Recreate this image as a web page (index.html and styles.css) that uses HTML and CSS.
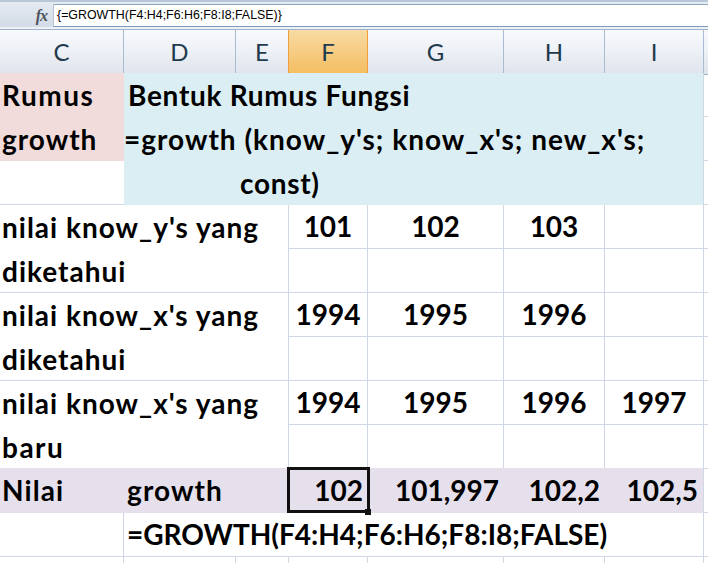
FILE: index.html
```html
<!DOCTYPE html>
<html>
<head>
<meta charset="utf-8">
<link rel="stylesheet" href="styles.css">
</head>
<body>
<div class="fbar">
  <div class="fx"><span class="fx-i">fx</span></div>
  <div class="formula">{=GROWTH(F4:H4;F6:H6;F8:I8;FALSE)}</div>
</div>
<div class="gap"></div>
<div class="hdr">
  <div class="h">C</div>
  <div class="h">D</div>
  <div class="h">E</div>
  <div class="h sel">F</div>
  <div class="h">G</div>
  <div class="h">H</div>
  <div class="h">I</div>
  <div class="h end"></div>
</div>
<div class="sheet">
  <!-- rows 1-3 -->
  <div class="pink"><div class="ln pl wl">Rumus</div><div class="ln pl">growth</div></div>
  <div class="blue">
    <div class="ln b1 nl">Bentuk Rumus Fungsi</div>
    <div class="ln b2">=growth (know_y's; know_x's; new_x's;</div>
    <div class="ln b3 nl">const)</div>
  </div>
  <div class="cell x"></div>
  <div class="cell x"></div>
  <div class="cell nr"></div>
  <div class="cell x"></div>

  <!-- rows 4-5 -->
  <div class="cell lab"><div class="ln pl">nilai know_y's yang</div><div class="ln pl">diketahui</div></div>
  <div class="cell num">101</div>
  <div class="cell num">102</div>
  <div class="cell num">103</div>
  <div class="cell num"></div>
  <div class="cell x"></div>
  <div class="cell"></div>
  <div class="cell"></div>
  <div class="cell"></div>
  <div class="cell"></div>
  <div class="cell x"></div>

  <!-- rows 6-7 -->
  <div class="cell lab"><div class="ln pl">nilai know_x's yang</div><div class="ln pl">diketahui</div></div>
  <div class="cell num">1994</div>
  <div class="cell num">1995</div>
  <div class="cell num">1996</div>
  <div class="cell num"></div>
  <div class="cell x"></div>
  <div class="cell"></div>
  <div class="cell"></div>
  <div class="cell"></div>
  <div class="cell"></div>
  <div class="cell x"></div>

  <!-- rows 8-9 -->
  <div class="cell lab"><div class="ln pl">nilai know_x's yang</div><div class="ln pl wl">baru</div></div>
  <div class="cell num">1994</div>
  <div class="cell num">1995</div>
  <div class="cell num">1996</div>
  <div class="cell num">1997</div>
  <div class="cell x"></div>
  <div class="cell"></div>
  <div class="cell"></div>
  <div class="cell"></div>
  <div class="cell"></div>
  <div class="cell x"></div>

  <!-- row 10 -->
  <div class="pur pl lw">Nilai</div>
  <div class="pur pd lw">growth</div>
  <div class="pur"></div>
  <div class="pur rt active">102<span class="selbox"></span><span class="handle"></span></div>
  <div class="pur rt">101,997</div>
  <div class="pur rt">102,2</div>
  <div class="pur rt last">102,5</div>
  <div class="cell x"></div>

  <!-- row 11 -->
  <div class="cell"></div>
  <div class="cell wide pd">=GROWTH(F4:H4;F6:H6;F8:I8;FALSE)</div>
  <div class="cell x"></div>

  <!-- row 12 -->
  <div class="cell"></div>
  <div class="cell"></div>
  <div class="cell"></div>
  <div class="cell"></div>
  <div class="cell"></div>
  <div class="cell"></div>
  <div class="cell"></div>
  <div class="cell x"></div>
</div>
</body>
</html>
```
FILE: styles.css
```css
html, body {
  margin: 0;
  padding: 0;
}
body {
  width: 708px;
  height: 563px;
  overflow: hidden;
  background: #ffffff;
  font-family: Lato, "Liberation Sans", sans-serif;
}

/* formula bar */
.fbar {
  display: flex;
  height: 27px;
  box-sizing: border-box;
  border-top: 2px solid #b9c8d9;
  padding-top: 2px;
  background: linear-gradient(to bottom, #e6ebf2 0%, #d9e1eb 60%, #d3dce7 100%);
}
.fx {
  width: 53px;
  flex: none;
  display: flex;
  align-items: center;
  justify-content: flex-end;
  padding-right: 6px;
  box-sizing: border-box;
}
.fx-i {
  font-family: "Liberation Serif", serif;
  font-style: italic;
  font-weight: 700;
  font-size: 16px;
  color: #4d535b;
  letter-spacing: -1px;
  line-height: 16px;
}
.formula {
  flex: 1;
  height: 23px;
  box-sizing: border-box;
  background: #ffffff;
  border-top: 1px solid #8ea7c1;
  border-bottom: 1px solid #7e9aba;
  border-left: 1px solid #b3c3d5;
  padding-left: 3px;
  font-family: "Liberation Sans", sans-serif;
  font-size: 12.4px;
  line-height: 21px;
  color: #000000;
  white-space: nowrap;
}
.gap {
  height: 2px;
  background: #eef2f7;
}

/* column headers */
.hdr {
  display: grid;
  grid-template-columns: 124px 112px 53px 79px 136px 101px 99px 1fr;
  height: 44px;
  box-sizing: border-box;
  border-top: 1px solid #9fb4cc;
}
.h {
  box-sizing: border-box;
  border-right: 1px solid #a7bbd3;
  border-bottom: 1px solid #9eb4cd;
  background: linear-gradient(to bottom, #f8f9fc 0%, #eef1f6 45%, #dfe4ec 100%);
  text-align: center;
  font-size: 24px;
  line-height: 44px;
  color: #1f3a4c;
}
.h.sel {
  margin-left: -1px;
  border-left: 1px solid #f29c3a;
  border-right: 1px solid #f29c3a;
  border-bottom: 1px solid #f29c3a;
  background: linear-gradient(to bottom, #f9dba3 0%, #f7cc82 50%, #f4bd60 100%);
}
.h.end {
  border-right: none;
}

/* sheet body */
.sheet {
  display: grid;
  grid-template-columns: 124px 112px 53px 79px 136px 101px 99px 1fr;
  grid-auto-rows: 44px;
  height: 490px;
  overflow: hidden;
  font-weight: 700;
  font-size: 28px;
  color: #000000;
}
.cell {
  box-sizing: border-box;
  border-right: 1px solid #d0d7e5;
  border-bottom: 1px solid #d0d7e5;
  line-height: 43px;
  white-space: nowrap;
}
.cell.x {
  border-right: none;
}
.cell.nr {
  border-right: none;
}
.ln {
  height: 44px;
  line-height: 44px;
  white-space: nowrap;
  letter-spacing: 1px;
}
.ln.wl {
  letter-spacing: 1.5px;
}
.ln.nl {
  letter-spacing: 0.7px;
}
.lw {
  letter-spacing: 1.1px;
}
.pl {
  padding-left: 2px;
}
.pd {
  padding-left: 3px;
}
.pink {
  grid-row: span 2;
  background: #f2dcdb;
}
.blue {
  grid-column: span 6;
  grid-row: span 3;
  background: #dbeef3;
  box-sizing: border-box;
  border-right: 1px solid #d0d7e5;
}
.b1 {
  padding-left: 4px;
}
.b2 {
  padding-left: 0;
}
.b3 {
  padding-left: 116px;
}
.lab {
  grid-column: span 3;
  grid-row: span 2;
}
.num {
  text-align: center;
}
.pur {
  background: #e5e0ec;
  margin-top: -1px;
  line-height: 45px;
  white-space: nowrap;
  box-sizing: border-box;
  border-bottom: 1px solid #e5e0ec;
}
.pur.last {
  border-right: 1px solid #d0d7e5;
}
.rt {
  text-align: right;
  padding-right: 5px;
}
.active {
  position: relative;
}
.selbox {
  position: absolute;
  top: -1px;
  left: -2px;
  right: -2px;
  bottom: -1px;
  border: 3px solid #111111;
}
.handle {
  position: absolute;
  right: -3px;
  bottom: -3px;
  width: 6px;
  height: 6px;
  background: #111111;
}
.wide {
  grid-column: span 6;
}
```
